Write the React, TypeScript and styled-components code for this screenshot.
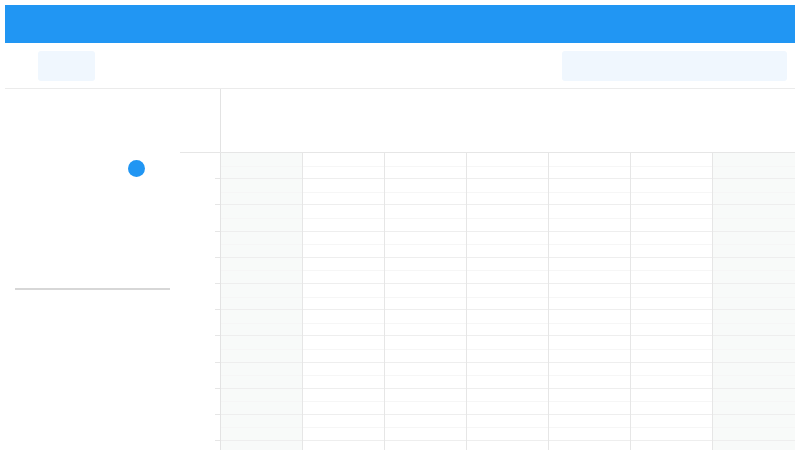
import React from "react";
import styled, { createGlobalStyle } from "styled-components";

const GlobalStyle = createGlobalStyle`
  html, body {
    margin: 0;
    padding: 0;
    background: #ffffff;
    font-family: "Roboto", "Liberation Sans", sans-serif;
  }
`;

const Page = styled.div`
  height: 450px;
  padding: 5px 5px 0;
  box-sizing: border-box;
  overflow: hidden;
  display: flex;
  flex-direction: column;
`;

const AppBar = styled.header`
  height: 38px;
  flex: none;
  background: #2196f3;
`;

const Toolbar = styled.div`
  height: 46px;
  flex: none;
  display: flex;
  align-items: flex-start;
  justify-content: space-between;
  padding: 8px 8px 0 33px;
  box-sizing: border-box;
  border-bottom: 1px solid #ebebeb;
`;

const ToolButton = styled.div<{ $w: number }>`
  width: ${(p) => p.$w}px;
  height: 30px;
  border-radius: 3px;
  background: #f0f7fe;
`;

const Main = styled.div`
  flex: 1;
  display: flex;
  min-height: 0;
`;

const Sidebar = styled.aside`
  width: 175px;
  flex: none;
  padding: 71px 10px 0;
  box-sizing: border-box;
  display: flex;
  flex-direction: column;
`;

const Dot = styled.div`
  width: 17px;
  height: 17px;
  border-radius: 50%;
  background: #2196f3;
  margin-left: 113px;
`;

const Divider = styled.div`
  margin-top: 111px;
  height: 2px;
  background: #d7d7d7;
`;

const Calendar = styled.section`
  flex: 1;
  display: flex;
  flex-direction: column;
  min-width: 0;
`;

const HeaderRow = styled.div`
  height: 63px;
  flex: none;
  display: flex;
  border-bottom: 1px solid #e6e6e6;
`;

const HeaderGutter = styled.div`
  width: 40px;
  flex: none;
  border-right: 1px solid #e3e3e3;
`;

const Body = styled.div`
  flex: 1;
  display: flex;
`;

const Gutter = styled.div`
  width: 40px;
  flex: none;
  border-right: 1px solid #e3e3e3;
`;

const GutterSlot = styled.div`
  height: 26.2px;
  box-sizing: border-box;
  position: relative;
  &::after {
    content: "";
    position: absolute;
    right: 0;
    bottom: 0;
    width: 5px;
    height: 1px;
    background: #e6e6e6;
  }
`;

const Days = styled.div`
  flex: 1;
  display: grid;
  grid-template-columns: repeat(7, 1fr);
`;

const DayColumn = styled.div<{ $weekend?: boolean; $last?: boolean }>`
  background: ${(p) => (p.$weekend ? "#f8faf9" : "#ffffff")};
  border-right: ${(p) => (p.$last ? "none" : "1px solid #e6e6e6")};
`;

const HourSlot = styled.div`
  height: 26.2px;
  box-sizing: border-box;
  border-bottom: 1px solid #eeeeee;
  position: relative;
  &::after {
    content: "";
    position: absolute;
    left: 0;
    right: 0;
    top: 12.6px;
    height: 1px;
    background: #f6f6f6;
  }
`;

const hours = Array.from({ length: 12 }, (_, i) => i);
const days = ["sun", "mon", "tue", "wed", "thu", "fri", "sat"];

export default function App() {
  return (
    <>
      <GlobalStyle />
      <Page>
        <AppBar />
        <Toolbar>
          <ToolButton $w={57} />
          <ToolButton $w={225} />
        </Toolbar>
        <Main>
          <Sidebar>
            <Dot />
            <Divider />
          </Sidebar>
          <Calendar>
            <HeaderRow>
              <HeaderGutter />
            </HeaderRow>
            <Body>
              <Gutter>
                {hours.map((h) => (
                  <GutterSlot key={h} />
                ))}
              </Gutter>
              <Days>
                {days.map((d, i) => (
                  <DayColumn key={d} $weekend={i === 0 || i === 6} $last={i === 6}>
                    {hours.map((h) => (
                      <HourSlot key={h} />
                    ))}
                  </DayColumn>
                ))}
              </Days>
            </Body>
          </Calendar>
        </Main>
      </Page>
    </>
  );
}
